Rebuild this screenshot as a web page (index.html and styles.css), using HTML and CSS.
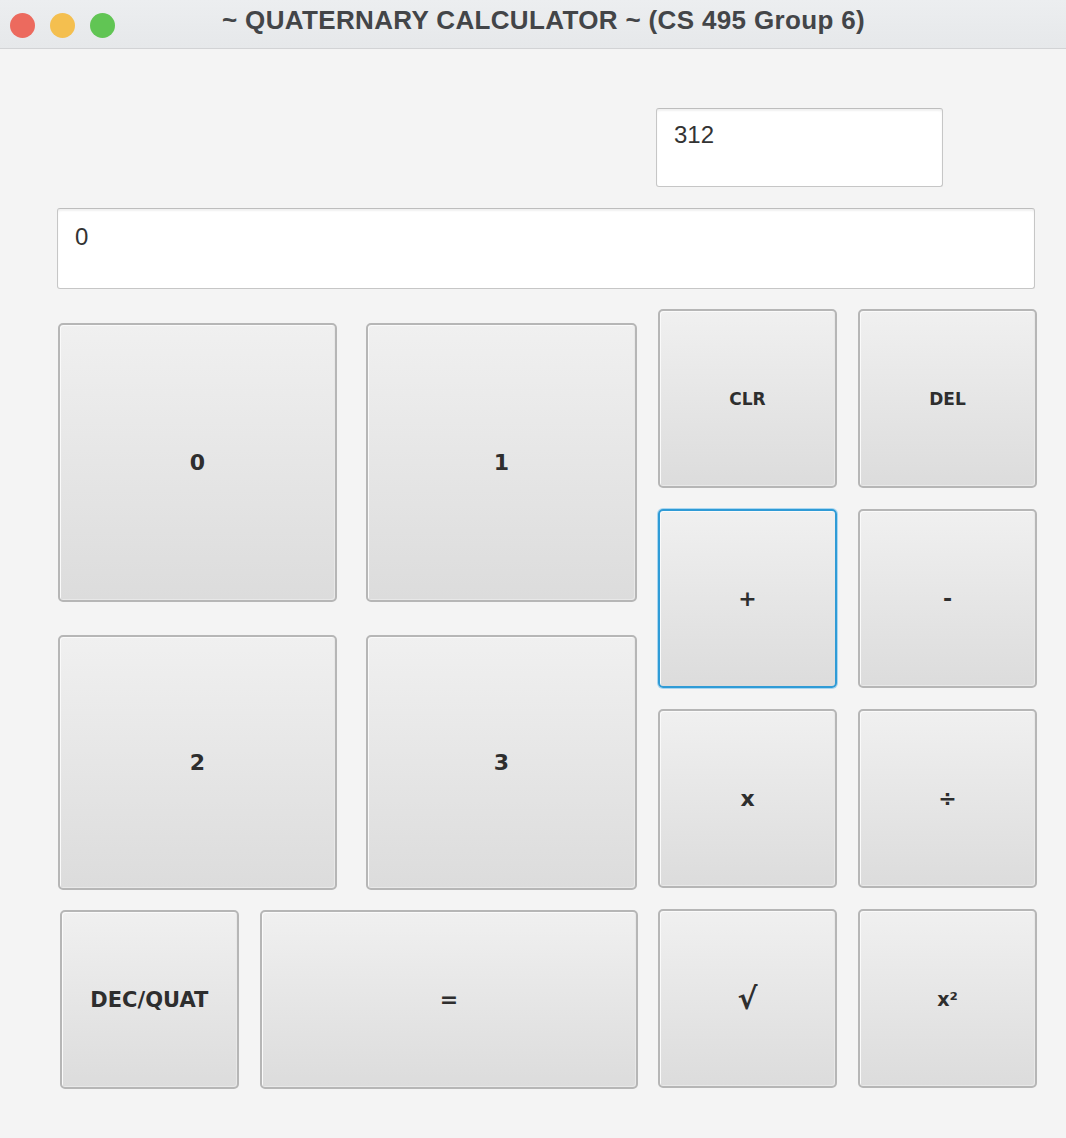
FILE: index.html
```html
<!DOCTYPE html>
<html>
<head>
<meta charset="utf-8">
<link rel="stylesheet" href="styles.css">
</head>
<body>
<div class="window">
  <div class="titlebar">
    <div class="lights">
      <span class="light red"></span>
      <span class="light yellow"></span>
      <span class="light green"></span>
    </div>
    <div class="title">~ QUATERNARY CALCULATOR ~ (CS 495 Group 6)</div>
  </div>
  <div class="content">
    <div class="field-row">
      <div class="field small">312</div>
    </div>
    <div class="field large">0</div>
    <div class="keypad">
      <div class="left">
        <div class="lrow r1">
          <div class="btn wide0">0</div>
          <div class="btn wide1">1</div>
        </div>
        <div class="lrow r2">
          <div class="btn wide0">2</div>
          <div class="btn wide1">3</div>
        </div>
        <div class="lrow r3">
          <div class="btn sq sm2">DEC/QUAT</div>
          <div class="btn eq">=</div>
        </div>
      </div>
      <div class="right">
        <div class="btn sq sm">CLR</div>
        <div class="btn sq sm">DEL</div>
        <div class="btn sq focus">+</div>
        <div class="btn sq">-</div>
        <div class="btn sq">x</div>
        <div class="btn sq">÷</div>
        <div class="btn sq root">√</div>
        <div class="btn sq sq2">x²</div>
      </div>
    </div>
  </div>
</div>
</body>
</html>
```
FILE: styles.css
```css
* { box-sizing: border-box; }
html, body { margin: 0; padding: 0; }
body {
  width: 1066px;
  height: 1138px;
  background: #f4f4f4;
  font-family: "DejaVu Sans", sans-serif;
  overflow: hidden;
}
.window { width: 1066px; height: 1138px; }
.titlebar {
  height: 49px;
  background: linear-gradient(#eceef0, #e6e8ea);
  border-bottom: 1px solid #d2d3d5;
  display: flex;
  align-items: center;
}
.lights {
  display: flex;
  gap: 15px;
  padding-left: 10px;
  padding-top: 2px;
}
.light {
  width: 25px;
  height: 25px;
  border-radius: 50%;
  display: block;
}
.red { background: #ec6a5e; }
.yellow { background: #f4bf4f; }
.green { background: #61c554; }
.title {
  margin-left: 107px;
  font-family: "Liberation Sans", Arial, sans-serif;
  font-weight: bold;
  font-size: 26px;
  color: #434548;
  letter-spacing: 0.35px;
  padding-bottom: 7px;
}
.content {
  padding-top: 59px;
}
.field-row {
  display: flex;
  padding-left: 656px;
}
.field {
  background: #fff;
  border: 1px solid #c6c6c6;
  border-top-color: #bdbdbd;
  border-radius: 3px;
  box-shadow: inset 0 2px 2px rgba(0,0,0,0.06);
  font-family: "Liberation Sans", Arial, sans-serif;
  font-size: 24px;
  color: #333;
  padding: 12px 17px;
}
.field.small { width: 287px; height: 79px; }
.field.large {
  margin-top: 21px;
  margin-left: 57px;
  width: 978px;
  height: 81px;
  padding-top: 14px;
}
.keypad {
  display: flex;
  margin-top: 20px;
  padding-left: 58px;
  gap: 19px;
}
.left {
  width: 580px;
  display: flex;
  flex-direction: column;
  padding-top: 14px;
}
.lrow { display: flex; gap: 29px; }
.lrow.r2 { margin-top: 33px; }
.lrow.r3 { margin-top: 20px; gap: 21px; padding-left: 2px; }
.right {
  display: grid;
  grid-template-columns: 179px 179px;
  grid-auto-rows: 179px;
  column-gap: 21px;
  row-gap: 21px;
  padding-left: 1px;
}
.btn {
  border: 2px solid #b6b6b6;
  border-radius: 5px;
  background: linear-gradient(#f0f0f0, #dcdcdc);
  box-shadow: inset 1px 1px 0 #fafafa, inset -1px -1px 0 #e8e8e8;
  display: flex;
  align-items: center;
  justify-content: center;
  font-weight: bold;
  font-size: 22px;
  color: #2e2e2e;
}
.wide0 { width: 279px; }
.wide1 { width: 271px; }
.r1 .btn { height: 279px; }
.r2 .btn { height: 255px; }
.r3 .btn { height: 179px; }
.sq { width: 179px; height: 179px; }
.eq { width: 379px; }
.sm { font-size: 17px; }
.sm2 { font-size: 21px; }
.sq2 { font-size: 19px; }
.root { font-size: 30px; }
.focus {
  border-color: #2f9bd6;
  box-shadow: 0 0 0 1px #a9d6f0, inset 1px 1px 0 #fafafa;
}
```
